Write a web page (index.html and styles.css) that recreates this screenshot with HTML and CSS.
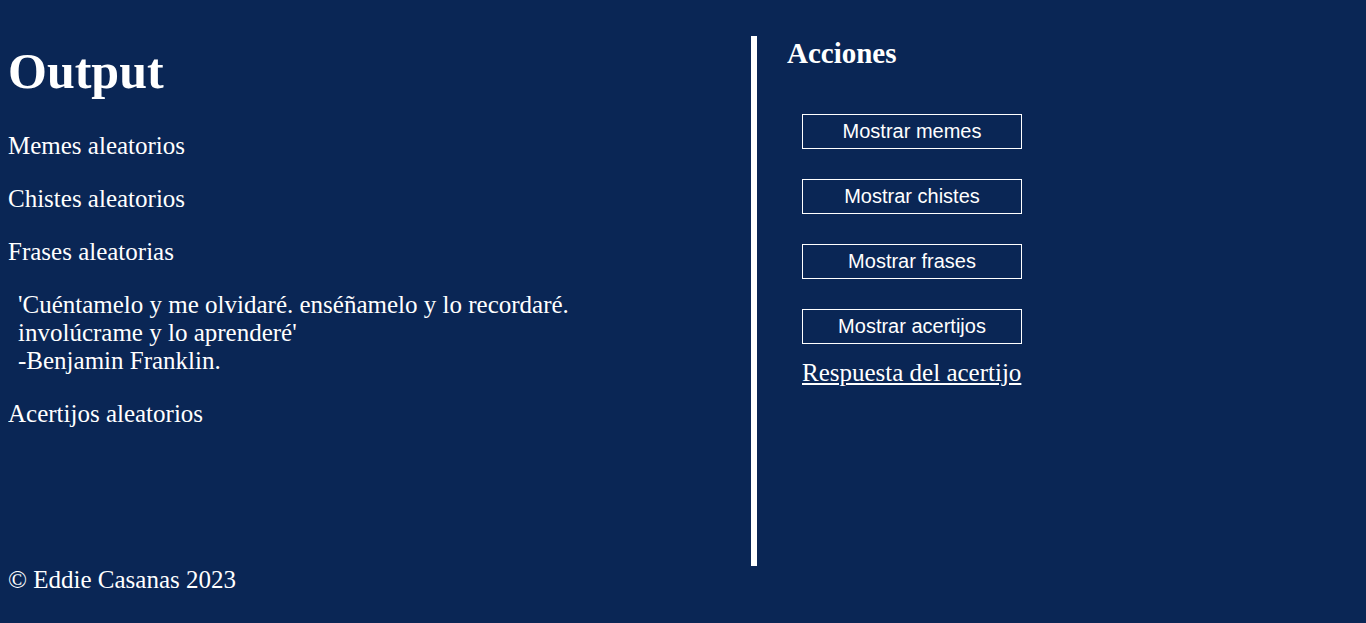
FILE: index.html
```html
<!DOCTYPE html>
<html>
    <head>
        <meta http-equiv='Content-Type' content='text/html; charset=UTF-8'>
        <title>Output</title>
        <link rel="stylesheet" href="styles.css">
    </head>
    <body>
        <div id='wrapper'>
            <div id='output'>
                <h1>Output</h1>
                <p>Memes aleatorios</p>
                <p>Chistes aleatorios</p>
                <p>Frases aleatorias</p>
                <p class='quote'>'Cuéntamelo y me olvidaré. enséñamelo y lo recordaré.<br>involúcrame y lo aprenderé'<br>-Benjamin Franklin.</p>
                <p>Acertijos aleatorios</p>
            </div>
            <div id='actions'>
                <h2>Acciones</h2>
                <div class='buttons'>
                    <button class='btn'>Mostrar memes</button>
                    <button class='btn'>Mostrar chistes</button>
                    <button class='btn'>Mostrar frases</button>
                    <button class='btn'>Mostrar acertijos</button>
                </div>
                <a class='answer' href='#'>Respuesta del acertijo</a>
            </div>
        </div>
        <footer>© Eddie Casanas 2023</footer>
    </body>
</html>
```

FILE: styles.css
```css
body {
    margin: 0;
    padding: 0 8px;
    background-color: #0a2655;
    color: #fff;
    font-family: "Liberation Serif", "Times New Roman", serif;
    font-size: 25px;
}
#wrapper {
    display: flex;
    margin-top: 36px;
    height: 530px;
}
#output {
    width: 743px;
    border-right: 6px solid #fff;
    overflow: hidden;
}
#output h1 {
    font-size: 50px;
    margin: 6px 0 32px 0;
}
#output p {
    margin: 25px 0;
}
#output .quote {
    padding-left: 10px;
}
#actions {
    padding-left: 30px;
}
#actions h2 {
    font-size: 29px;
    margin: 1px 0 0 0;
}
.buttons {
    display: flex;
    flex-direction: column;
    gap: 30px;
    margin: 44px 0 15px 15px;
}
.btn {
    width: 220px;
    height: 35px;
    background: transparent;
    border: 1px solid #fff;
    color: #fff;
    font-family: "Liberation Sans", Arial, sans-serif;
    font-size: 20px;
    padding: 0;
}
.answer {
    display: block;
    margin-left: 15px;
    color: #fff;
}
footer {
    line-height: 1.107;
}
```
